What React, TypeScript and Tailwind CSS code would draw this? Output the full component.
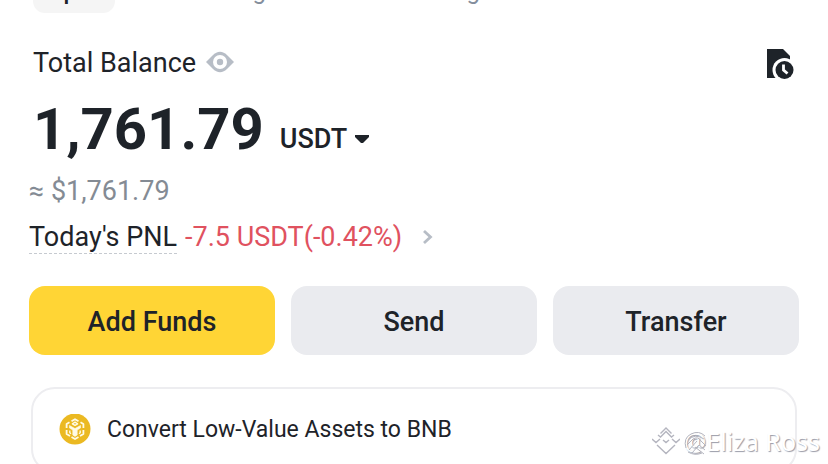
import type { ReactNode } from 'react';

const TABS = ['Spot', 'Cross Margin', 'Isolated Margin'];

function EyeIcon() {
  return (
    <svg className="h-6 w-7" viewBox="0 0 28 24" fill="none" aria-hidden>
      <path d="M0 11 6.5 4.5Q14-3 21.5 4.5L28 11 21.5 17.5Q14 25 6.5 17.5Z" fill="#b7bdc6" />
      <circle cx="14" cy="11" r="7" fill="#fff" />
      <circle cx="14" cy="11" r="3.2" fill="#b7bdc6" />
    </svg>
  );
}

function HistoryIcon() {
  return (
    <svg className="h-8 w-7" viewBox="0 0 28 32" fill="none" aria-hidden>
      <path d="M0 0H16L23 7V29H0Z" fill="#1e2329" />
      <circle cx="17.5" cy="21" r="12" fill="#fff" />
      <circle cx="17.5" cy="21" r="9" fill="#1e2329" />
      <path d="M16.5 15.5V21L20.5 24.5" stroke="#fff" strokeWidth="2.8" />
    </svg>
  );
}

function BnbIcon() {
  return (
    <svg className="h-8 w-8 shrink-0" viewBox="0 0 32 32" fill="none" aria-hidden>
      <circle cx="16" cy="15" r="15.5" fill="#ebb922" />
      <g stroke="#fffbe6" strokeWidth="1.8" strokeLinejoin="round">
        <path d="M12.5 7.3 16 5.2 19.5 7.3M10.5 8.3 7.6 10V14M21.5 8.3 24.4 10V14M7.6 16V20L11 22M24.4 16V20L21 22M12.5 23 16 25 19.5 23" />
        <path d="M16 8.2 18.6 9.8 16 11.3 13.4 9.8Z" strokeWidth="1.4" />
        <path d="M10.5 11.5 16 14.6 21.5 11.5V14L18.2 16V21L16 22.4 13.8 21V16L10.5 14Z" fill="#fffbe6" strokeWidth="0.6" />
        <path d="M10.8 16.5V18.8L12 19.7M21.2 16.5V18.8L20 19.7" strokeWidth="1.4" />
      </g>
    </svg>
  );
}

function ActionButton({ className, children }: { className: string; children: ReactNode }) {
  return (
    <button type="button" className={`h-[69px] rounded-2xl pt-1 text-[27px] font-medium ${className}`}>
      {children}
    </button>
  );
}

function Watermark() {
  return (
    <div className="absolute right-2 bottom-1 flex items-center gap-1 font-['Noto_Sans',sans-serif] text-[25px] text-white [text-shadow:1px_1px_1px_#9a9ca8]">
      <svg className="h-7 w-7" viewBox="0 0 28 28" fill="none" stroke="#b4b5bf" strokeWidth="1.4" aria-hidden>
        <path d="M6 8 8.5 10 14 4.5 19.5 10 22 8M8.5 6.5 14 1 19.5 6.5M0 12 4 15.5 8 12M11 13 14 15.5 17 13M20 12 24 15.5 28 12M5 18 14 26.5 23 18" />
      </svg>
      <span className="relative">
        @Eliza Ross
        <svg className="absolute top-2 left-0 h-6 w-6" viewBox="0 0 24 24" fill="none" stroke="#b4b5bf" aria-hidden>
          <path d="M2 17Q-1 7 7 3Q15-1 21 5M4 9Q11 2 20 8M3 14 9 8Q14 5 17 10L22 15M5 19 13 10M8 22 15 14 21 19M11 16 20 23M4 21Q11 25 18 22" />
        </svg>
      </span>
    </div>
  );
}

export default function App() {
  return (
    <main className="relative flex h-screen flex-col overflow-hidden bg-white px-[29px] font-[Roboto,sans-serif] text-[#1e2329]">
      <nav className="-mt-7 flex h-[41px] shrink-0 gap-4 pl-1 text-2xl" aria-label="Accounts">
        {TABS.map((tab, i) => (
          <a
            key={tab}
            href="#"
            className={`flex items-center rounded-xl px-4 pb-1 whitespace-nowrap ${i === 0 ? '-mr-1 bg-[#f5f5f5] font-medium' : 'text-[#848e9c]'}`}
          >
            {tab}
          </a>
        ))}
      </nav>

      <header className="mt-8 flex h-9 shrink-0 items-center justify-between pr-1 pl-1">
        <div className="flex items-center gap-2.5">
          <h1 className="text-[27px]">Total Balance</h1>
          <button type="button" aria-label="Hide balance">
            <EyeIcon />
          </button>
        </div>
        <button type="button" className="pt-1" aria-label="History">
          <HistoryIcon />
        </button>
      </header>

      <div className="mt-3 flex shrink-0 items-end gap-4 pl-1">
        <span className="text-[58px] leading-[72px] font-bold">1,761.79</span>
        <button type="button" className="flex items-center gap-2 pb-2.5 text-[27px] leading-8 font-medium">
          USDT
          <svg className="h-2 w-3.5" viewBox="0 0 14 8" fill="currentColor" aria-hidden>
            <path d="M0 0H14V2L8 8H6L0 2Z" />
          </svg>
        </button>
      </div>

      <p className="mt-2.5 shrink-0 text-[27px] leading-8 text-[#848b94]">≈ $1,761.79</p>

      <div className="mt-3.5 flex shrink-0 items-start gap-2 text-[27px] leading-8">
        <span className="border-b border-dashed border-[#c6cad0]">Today's PNL</span>
        <a href="#" className="flex items-center gap-5 text-[#e0525f]">
          -7.5 USDT(-0.42%)
          <svg className="h-4 w-3" viewBox="0 0 12 16" fill="none" stroke="#b7bdc6" strokeWidth="2.8" aria-hidden>
            <path d="M2 2 8.5 8 2 14" />
          </svg>
        </a>
      </div>

      <div className="mt-8 grid shrink-0 grid-cols-3 gap-4">
        <ActionButton className="bg-[#ffd535]">Add Funds</ActionButton>
        <ActionButton className="bg-[#eaebef]">Send</ActionButton>
        <ActionButton className="bg-[#eaebef]">Transfer</ActionButton>
      </div>

      <a
        href="#"
        className="mx-0.5 mt-8 flex h-[86px] shrink-0 items-center gap-4 rounded-3xl border-2 border-[#ededf0] px-[26px] text-[23px]"
      >
        <BnbIcon />
        Convert Low-Value Assets to BNB
      </a>

      <Watermark />
    </main>
  );
}
